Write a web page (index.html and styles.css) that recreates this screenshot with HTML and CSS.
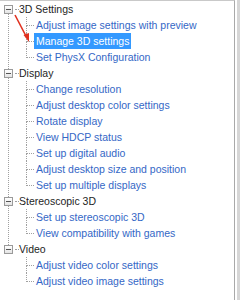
FILE: index.html
```html
<!DOCTYPE html>
<html>
<head>
    <title>NVIDIA Control Panel - Tasks</title>
    <link rel="stylesheet" href="styles.css">
</head>
<body>
<div class="frame">
    <div class="panel">
        <ul class="tree">
            <li class="group">
                <div class="head"><span class="box"></span>3D Settings</div>
                <ul class="sub">
                    <li class="item"><span>Adjust image settings with preview</span></li>
                    <li class="item"><span class="selected">Manage 3D settings</span></li>
                    <li class="item"><span>Set PhysX Configuration</span></li>
                </ul>
            </li>
            <li class="group">
                <div class="head"><span class="box"></span>Display</div>
                <ul class="sub">
                    <li class="item"><span>Change resolution</span></li>
                    <li class="item"><span>Adjust desktop color settings</span></li>
                    <li class="item"><span>Rotate display</span></li>
                    <li class="item"><span>View HDCP status</span></li>
                    <li class="item"><span>Set up digital audio</span></li>
                    <li class="item"><span>Adjust desktop size and position</span></li>
                    <li class="item"><span>Set up multiple displays</span></li>
                </ul>
            </li>
            <li class="group">
                <div class="head"><span class="box"></span>Stereoscopic 3D</div>
                <ul class="sub">
                    <li class="item"><span>Set up stereoscopic 3D</span></li>
                    <li class="item"><span>View compatibility with games</span></li>
                </ul>
            </li>
            <li class="group">
                <div class="head"><span class="box"></span>Video</div>
                <ul class="sub">
                    <li class="item"><span>Adjust video color settings</span></li>
                    <li class="item"><span>Adjust video image settings</span></li>
                </ul>
            </li>
        </ul>
        <!-- red pointer drawn over the tree -->
        <svg class="pointer" width="40" height="50" viewBox="0 0 40 50">
            <line x1="15" y1="14" x2="27" y2="37" stroke="#e0301e" stroke-width="1.6"/>
            <polygon points="29,41 23.5,34 29,32" fill="#e0301e"/>
        </svg>
    </div>
    <div class="strip"></div>
</div>
</body>
</html>
```
FILE: styles.css
```css
body {
    margin: 0;
    background: #fff;
    font-family: "Liberation Sans", Arial, sans-serif;
    font-size: 10.5px;
}

.frame {
    display: flex;
    height: 300px;
}

.panel {
    position: relative;
    width: 235px;
    border-top: 1px solid #c9c9c9;
    border-right: 1px solid #a9a9a9;
    box-sizing: border-box;
}

.strip {
    width: 1px;
    margin-left: 1px;
    border-right: 3px solid #d6d6d6;
    background: #fff;
}

.tree,
.sub {
    list-style: none;
    margin: 0;
    padding: 0;
}

.group {
    position: relative;
}

.group:not(:last-child)::before {
    content: "";
    position: absolute;
    left: 8px;
    top: 12px;
    bottom: -4px;
    border-left: 1px dotted #a0a0a0;
}

.head {
    display: flex;
    align-items: center;
    height: 16px;
    padding-left: 4px;
    color: #1e1e1e;
}

.box {
    position: relative;
    width: 7px;
    height: 7px;
    border: 1px solid #9a9a9a;
    background: linear-gradient(#fff, #e4e4e4);
    margin-right: 6px;
}

.box::before {
    content: "";
    position: absolute;
    left: 1px;
    top: 3px;
    width: 5px;
    height: 1px;
    background: #555;
}

.box::after {
    content: "";
    position: absolute;
    left: 10px;
    top: 3px;
    width: 4px;
    border-top: 1px dotted #a0a0a0;
}

.sub {
    margin-left: 26px;
}

.item {
    position: relative;
    height: 16px;
    line-height: 16px;
    padding-left: 8px;
    color: #3467c6;
    white-space: nowrap;
}

.item::before {
    content: "";
    position: absolute;
    left: 0;
    top: 0;
    width: 7px;
    height: 8px;
    border-left: 1px dotted #a0a0a0;
    border-bottom: 1px dotted #a0a0a0;
}

.item:not(:last-child)::after {
    content: "";
    position: absolute;
    left: 0;
    top: 8px;
    bottom: 0;
    border-left: 1px dotted #a0a0a0;
}

.item span {
    padding: 2px 2px;
}

.selected {
    background: #3399ff;
    color: #fff;
}

.pointer {
    position: absolute;
    left: 0;
    top: 0;
}
```
